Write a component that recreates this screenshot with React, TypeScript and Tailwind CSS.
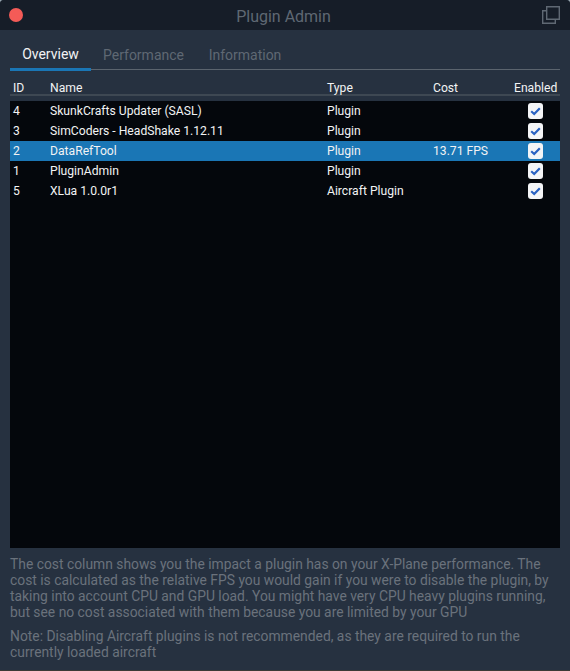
const rows = [
  { id: "4", name: "SkunkCrafts Updater (SASL)", type: "Plugin", cost: "" },
  { id: "3", name: "SimCoders - HeadShake 1.12.11", type: "Plugin", cost: "" },
  { id: "2", name: "DataRefTool", type: "Plugin", cost: "13.71 FPS", selected: true },
  { id: "1", name: "PluginAdmin", type: "Plugin", cost: "" },
  { id: "5", name: "XLua 1.0.0r1", type: "Aircraft Plugin", cost: "" },
];

function Check() {
  return (
    <span className="flex h-[16px] w-[15px] items-center justify-center rounded-[3px] bg-[#f4f5f7]">
      <svg width="11" height="9" viewBox="0 0 11 9" fill="none">
        <path d="M1.2 4.3 L4.2 7 L9.8 1.2" stroke="#2a62c2" strokeWidth="2.2" />
      </svg>
    </span>
  );
}

export default function App() {
  return (
    <div className="flex h-[671px] w-[570px] flex-col overflow-hidden bg-[#9aa7b0] font-['Roboto',sans-serif] text-[12.15px] text-[#f2f3f4]">
      <div className="flex h-[670px] shrink-0 flex-col overflow-hidden rounded-t-[4px] bg-[#263140]">
        <div className="flex h-[30px] shrink-0 items-center justify-between bg-[#161d28] pl-[9px] pr-[10px]">
          <span className="h-[14px] w-[14px] rounded-full bg-[#f45b57]" />
          <span className="pl-[2px] pt-[3px] text-[16px] text-[#5f6873]">Plugin Admin</span>
          <svg width="18" height="18" viewBox="0 0 18 18" fill="none" stroke="#5f6873" strokeWidth="1.4">
            <path d="M4.7 0.7 H17.3 V13.3 H4.7 Z" />
            <path d="M4.7 4.7 H0.7 V17.3 H13.3 V13.3" />
          </svg>
        </div>
        <div className="flex min-h-0 flex-1 flex-col px-[10px] pb-[10px]">
          <div className="mt-[10px] flex h-[30px] shrink-0 border-b border-[#5b646e] text-[14px]">
            <div className="flex h-[31px] w-[81px] items-center justify-center border-b-[3px] border-[#1a76b5] pt-[1px]">Overview</div>
            <div className="flex w-[105px] items-center justify-center pt-[1px] text-[#5f6873]">Performance</div>
            <div className="flex w-[98px] items-center justify-center pt-[1px] text-[#5f6873]">Information</div>
          </div>
          <div className="grid h-[26px] shrink-0 grid-cols-[37px_277px_106px_81px_56px] items-center border-b-2 border-[#3e4853] pl-[3px] pt-[9px]">
            <span>ID</span>
            <span>Name</span>
            <span>Type</span>
            <span>Cost</span>
            <span>Enabled</span>
          </div>
          <div className="mt-[5px] h-[447px] shrink-0 bg-[#04070c]">
            {rows.map((r) => (
              <div
                key={r.id}
                className={`grid h-[20px] grid-cols-[37px_277px_106px_81px_56px] items-center pl-[3px] ${r.selected ? "bg-[#1a76b5]" : ""}`}
              >
                <span>{r.id}</span>
                <span>{r.name}</span>
                <span>{r.type}</span>
                <span>{r.cost}</span>
                <span className="flex pl-[14px]"><Check /></span>
              </div>
            ))}
          </div>
          <div className="mt-[8px] text-[13.85px] leading-[16px] text-[#6a727c]">
            <p>The cost column shows you the impact a plugin has on your X-Plane performance. The cost is calculated as the relative FPS you would gain if you were to disable the plugin, by taking into account CPU and GPU load. You might have very CPU heavy plugins running, but see no cost associated with them because you are limited by your GPU</p>
            <p className="mt-[8px]">Note: Disabling Aircraft plugins is not recommended, as they are required to run the currently loaded aircraft</p>
          </div>
        </div>
      </div>
      <div className="h-[1px] shrink-0 bg-[#3b3a36]" />
    </div>
  );
}
